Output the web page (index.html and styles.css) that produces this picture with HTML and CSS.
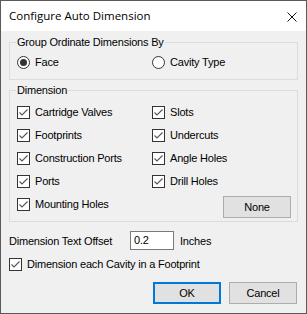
FILE: index.html
```html
<!DOCTYPE html>
<html lang="en">
<head>
    <meta charset="UTF-8">
    <title>Configure Auto Dimension</title>
    <link rel="stylesheet" href="styles.css">
</head>
<body>
<div class="window">
    <div class="titlebar">
        <span class="title">Configure Auto Dimension</span>
        <svg class="close" width="10" height="10" viewBox="0 0 10 10">
            <path d="M0.5 0.5L9.5 9.5M9.5 0.5L0.5 9.5" stroke="#111" stroke-width="1" fill="none"/>
        </svg>
    </div>
    <div class="content">
        <fieldset class="group group-by">
            <legend>Group Ordinate Dimensions By</legend>
            <div class="radio-row">
                <label class="option">
                    <svg class="mark" width="13" height="13" viewBox="0 0 13 13"><circle cx="6.5" cy="6.5" r="6" fill="#fff" stroke="#333"/><circle cx="6.5" cy="6.5" r="3.5" fill="#333"/></svg>
                    Face
                </label>
                <label class="option">
                    <svg class="mark" width="13" height="13" viewBox="0 0 13 13"><circle cx="6.5" cy="6.5" r="6" fill="#fff" stroke="#333"/></svg>
                    Cavity Type
                </label>
            </div>
        </fieldset>

        <fieldset class="group dims">
            <legend>Dimension</legend>
            <div class="check-grid">
                <label class="option"><svg class="mark" width="13" height="13" viewBox="0 0 13 13"><rect x="0.5" y="0.5" width="12" height="12" fill="#fff" stroke="#333"/><path d="M2.5 6.5L5 9L10.5 3.5" stroke="#555" stroke-width="1.1" fill="none"/></svg>Cartridge Valves</label>
                <label class="option"><svg class="mark" width="13" height="13" viewBox="0 0 13 13"><rect x="0.5" y="0.5" width="12" height="12" fill="#fff" stroke="#333"/><path d="M2.5 6.5L5 9L10.5 3.5" stroke="#555" stroke-width="1.1" fill="none"/></svg>Slots</label>
                <label class="option"><svg class="mark" width="13" height="13" viewBox="0 0 13 13"><rect x="0.5" y="0.5" width="12" height="12" fill="#fff" stroke="#333"/><path d="M2.5 6.5L5 9L10.5 3.5" stroke="#555" stroke-width="1.1" fill="none"/></svg>Footprints</label>
                <label class="option"><svg class="mark" width="13" height="13" viewBox="0 0 13 13"><rect x="0.5" y="0.5" width="12" height="12" fill="#fff" stroke="#333"/><path d="M2.5 6.5L5 9L10.5 3.5" stroke="#555" stroke-width="1.1" fill="none"/></svg>Undercuts</label>
                <label class="option"><svg class="mark" width="13" height="13" viewBox="0 0 13 13"><rect x="0.5" y="0.5" width="12" height="12" fill="#fff" stroke="#333"/><path d="M2.5 6.5L5 9L10.5 3.5" stroke="#555" stroke-width="1.1" fill="none"/></svg>Construction Ports</label>
                <label class="option"><svg class="mark" width="13" height="13" viewBox="0 0 13 13"><rect x="0.5" y="0.5" width="12" height="12" fill="#fff" stroke="#333"/><path d="M2.5 6.5L5 9L10.5 3.5" stroke="#555" stroke-width="1.1" fill="none"/></svg>Angle Holes</label>
                <label class="option"><svg class="mark" width="13" height="13" viewBox="0 0 13 13"><rect x="0.5" y="0.5" width="12" height="12" fill="#fff" stroke="#333"/><path d="M2.5 6.5L5 9L10.5 3.5" stroke="#555" stroke-width="1.1" fill="none"/></svg>Ports</label>
                <label class="option"><svg class="mark" width="13" height="13" viewBox="0 0 13 13"><rect x="0.5" y="0.5" width="12" height="12" fill="#fff" stroke="#333"/><path d="M2.5 6.5L5 9L10.5 3.5" stroke="#555" stroke-width="1.1" fill="none"/></svg>Drill Holes</label>
                <label class="option"><svg class="mark" width="13" height="13" viewBox="0 0 13 13"><rect x="0.5" y="0.5" width="12" height="12" fill="#fff" stroke="#333"/><path d="M2.5 6.5L5 9L10.5 3.5" stroke="#555" stroke-width="1.1" fill="none"/></svg>Mounting Holes</label>
                <div class="none-cell"><button class="btn none-btn">None</button></div>
            </div>
        </fieldset>

        <div class="offset-row">
            <span class="offset-label">Dimension Text Offset</span>
            <span class="text-input">0.2</span>
            <span>Inches</span>
        </div>

        <label class="option each-cavity"><svg class="mark" width="13" height="13" viewBox="0 0 13 13"><rect x="0.5" y="0.5" width="12" height="12" fill="#fff" stroke="#333"/><path d="M2.5 6.5L5 9L10.5 3.5" stroke="#555" stroke-width="1.1" fill="none"/></svg>Dimension each Cavity in a Footprint</label>

        <div class="actions">
            <button class="btn default">OK</button>
            <button class="btn">Cancel</button>
        </div>
    </div>
</div>
</body>
</html>
```

FILE: styles.css
```css
body {
    margin: 0;
    padding: 0;
    background: #f0f0f0;
}
.window {
    width: 307px;
    height: 314px;
    box-sizing: border-box;
    border: 1px solid #5a5a5a;
    background: #f0f0f0;
    font-family: "Liberation Sans", Arial, sans-serif;
    font-size: 11px;
    letter-spacing: -0.2px;
    color: #000;
}
.titlebar {
    height: 30px;
    background: #fff;
    display: flex;
    align-items: center;
    justify-content: space-between;
    padding: 0 9px 0 8px;
}
.title {
    font-family: "Open Sans", sans-serif;
    font-size: 11.5px;
    letter-spacing: 0;
    color: #000;
    margin-top: -1px;
}
.close {
    display: block;
    margin-top: 1px;
}
.content {
    padding: 0 8px;
}
.group {
    margin: 0;
    border: 1px solid #dcdcdc;
    padding: 0 6px 0 7px;
    min-width: 0;
}
.group legend {
    padding: 0 1px;
    margin-left: -1px;
    line-height: 13px;
    height: 13px;
}
.group-by {
    margin-top: 5px;
    padding-bottom: 10px;
}
.radio-row {
    display: grid;
    grid-template-columns: 135px 1fr;
    margin-top: 7px;
}
.option {
    display: flex;
    align-items: center;
    height: 13px;
    line-height: 13px;
    white-space: nowrap;
}
.mark {
    flex: none;
    margin-right: 5px;
}
.dims {
    margin-top: 4px;
    padding-bottom: 10px;
}
.check-grid {
    display: grid;
    grid-template-columns: 135px 1fr;
    grid-auto-rows: 13px;
    row-gap: 10px;
    margin-top: 9px;
}
.none-cell {
    display: flex;
    justify-content: flex-end;
    align-items: flex-start;
}
.btn {
    font-family: "Liberation Sans", Arial, sans-serif;
    font-size: 11px;
    letter-spacing: -0.2px;
    color: #000;
    background: #e1e1e1;
    border: 1px solid #adadad;
    padding: 0;
    height: 22px;
    width: 68px;
    box-sizing: border-box;
}
.none-btn {
    margin-top: -2px;
}
.offset-row {
    display: flex;
    align-items: center;
    margin-top: 9px;
    height: 19px;
}
.offset-label {
    width: 121px;
}
.text-input {
    width: 44px;
    height: 19px;
    box-sizing: border-box;
    border: 1px solid #7a7a7a;
    background: #fff;
    padding: 0 3px;
    line-height: 17px;
    margin-right: 6px;
}
.each-cavity {
    margin-top: 8px;
}
.actions {
    display: flex;
    justify-content: flex-end;
    gap: 8px;
    margin-top: 11px;
    padding-right: 1px;
}
.btn.default {
    border: 2px solid #0078d7;
}
```
